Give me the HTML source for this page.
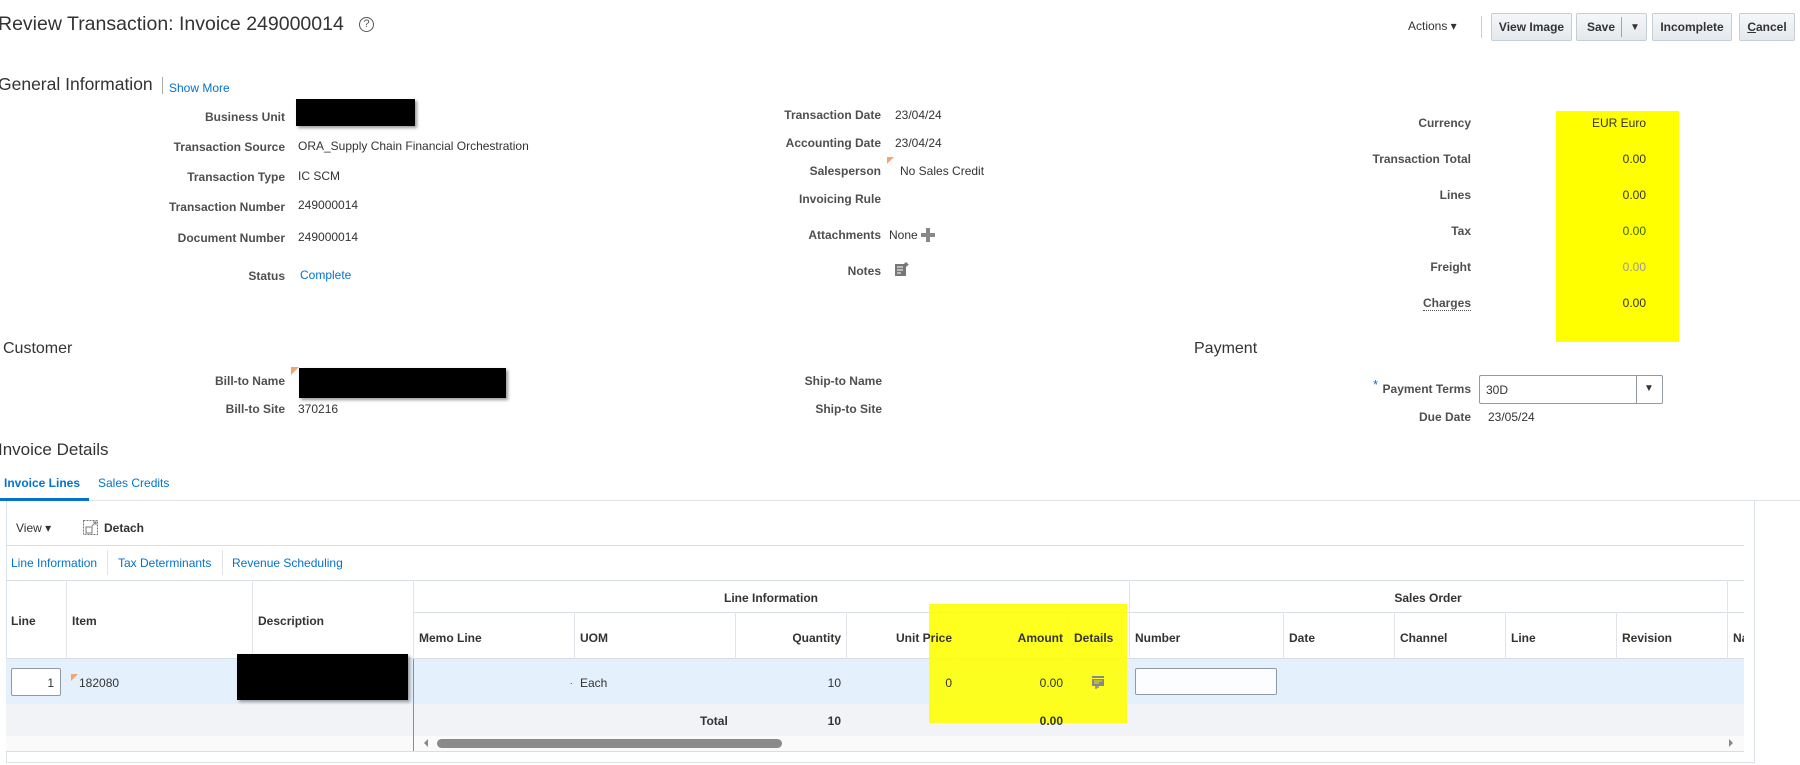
<!DOCTYPE html>
<html><head><meta charset="utf-8"><style>
*{margin:0;padding:0;box-sizing:border-box}
body{width:1800px;height:765px;overflow:hidden;background:#fff;font-family:"Liberation Sans",Arial,sans-serif;color:#333;position:relative;font-size:12px}
.a{position:absolute;white-space:nowrap}
.lb{position:absolute;white-space:nowrap;font-weight:bold;color:#4f4f4f;font-size:12px;text-align:right}
.v{position:absolute;white-space:nowrap;font-size:12px;color:#333}
.lk{color:#0572ce}
.btn{position:absolute;top:13px;height:28px;border:1px solid #c4ced7;border-radius:2px;background:linear-gradient(#f5f7f9,#e4e8ec);font-weight:bold;font-size:12px;color:#333;display:flex;align-items:center;justify-content:center}
.h{position:absolute;font-weight:bold;color:#333;font-size:12px;white-space:nowrap}
.vl{position:absolute;width:1px;background:#e1e5ea}
.hl{position:absolute;height:1px;background:#d6dfe6}
.rv{position:absolute;width:120px;text-align:right;color:#333;font-size:12px}
</style></head><body>

<div class="a" style="left:-2px;top:13px;font-size:19.5px;color:#333">Review Transaction: Invoice 249000014</div>
<div class="a" style="left:359px;top:17px;width:15px;height:15px;border:1.3px solid #555;border-radius:50%;font-size:11px;line-height:13px;text-align:center;color:#555">?</div>

<div class="a" style="left:1408px;top:19px;font-size:12px;color:#333">Actions ▾</div>
<div class="a" style="left:1481px;top:16px;width:1px;height:22px;background:#ccc"></div>
<div class="btn" style="left:1491px;width:81px">View Image</div>
<div class="btn" style="left:1576px;width:71px;justify-content:flex-start;padding-left:10px">Save<span style="position:absolute;left:44px;top:3px;bottom:3px;width:1px;background:#9aa"></span><span style="position:absolute;left:53px;font-size:10px">▼</span></div>
<div class="btn" style="left:1652px;width:80px">Incomplete</div>
<div class="btn" style="left:1739px;width:56px"><u>C</u>ancel</div>

<div class="a" style="left:-2px;top:74px;font-size:17.5px;color:#333">General Information</div>
<div class="a" style="left:162px;top:77px;width:1px;height:17px;background:#aaa"></div>
<div class="a lk" style="left:169px;top:81px;font-size:12px">Show More</div>

<div class="lb" style="right:1515px;top:110px">Business Unit</div>
<div class="a" style="left:296px;top:99px;width:119px;height:27px;background:#000;box-shadow:2px 2px 3px #999"></div>
<div class="lb" style="right:1515px;top:140px">Transaction Source</div><div class="v" style="left:298px;top:139px">ORA_Supply Chain Financial Orchestration</div>
<div class="lb" style="right:1515px;top:170px">Transaction Type</div><div class="v" style="left:298px;top:169px">IC SCM</div>
<div class="lb" style="right:1515px;top:200px">Transaction Number</div><div class="v" style="left:298px;top:198px">249000014</div>
<div class="lb" style="right:1515px;top:231px">Document Number</div><div class="v" style="left:298px;top:230px">249000014</div>
<div class="lb" style="right:1515px;top:269px">Status</div><div class="v lk" style="left:300px;top:268px">Complete</div>

<div class="lb" style="right:919px;top:108px">Transaction Date</div><div class="v" style="left:895px;top:108px">23/04/24</div>
<div class="lb" style="right:919px;top:136px">Accounting Date</div><div class="v" style="left:895px;top:136px">23/04/24</div>
<div class="a" style="left:887px;top:157px;width:0;height:0;border-top:7px solid #f6a36f;border-right:7px solid transparent"></div>
<div class="lb" style="right:919px;top:164px">Salesperson</div><div class="v" style="left:900px;top:164px">No Sales Credit</div>
<div class="lb" style="right:919px;top:192px">Invoicing Rule</div>
<div class="lb" style="right:919px;top:228px">Attachments</div><div class="v" style="left:889px;top:228px">None</div>
<div class="a" style="left:921px;top:228px;width:14px;height:14px"><div style="position:absolute;left:5px;top:0;width:4px;height:14px;background:#888"></div><div style="position:absolute;left:0;top:5px;width:14px;height:4px;background:#888"></div></div>
<div class="lb" style="right:919px;top:264px">Notes</div>
<svg class="a" style="left:895px;top:262px" width="14" height="14" viewBox="0 0 14 14"><rect x="0" y="2" width="11" height="12" fill="#777"/><path d="M2 5h6M2 8h6M2 11h4" stroke="#fff" stroke-width="1"/><path d="M11 0v5M8.5 2.5h5M9.5 1l3 3M12.5 1l-3 3" stroke="#777" stroke-width="1"/></svg>

<div class="a" style="left:1556px;top:111px;width:123px;height:231px;background:#ffff00"></div>
<div class="lb" style="right:329px;top:116px">Currency</div><div class="rv" style="left:1526px;top:116px">EUR Euro</div>
<div class="lb" style="right:329px;top:152px">Transaction Total</div><div class="rv" style="left:1526px;top:152px">0.00</div>
<div class="lb" style="right:329px;top:188px">Lines</div><div class="rv" style="left:1526px;top:188px">0.00</div>
<div class="lb" style="right:329px;top:224px">Tax</div><div class="rv" style="left:1526px;top:224px;color:#3a6a00">0.00</div>
<div class="lb" style="right:329px;top:260px">Freight</div><div class="rv" style="left:1526px;top:260px;color:#999">0.00</div>
<div class="lb" style="right:329px;top:296px;border-bottom:1px dotted #555">Charges</div><div class="rv" style="left:1526px;top:296px">0.00</div>

<div class="a" style="left:3px;top:340px;font-size:16px">Customer</div>
<div class="a" style="left:1194px;top:340px;font-size:16px">Payment</div>
<div class="a" style="left:291px;top:367px;width:0;height:0;border-top:8px solid #f6a36f;border-right:8px solid transparent"></div>
<div class="lb" style="right:1515px;top:374px">Bill-to Name</div>
<div class="a" style="left:299px;top:368px;width:207px;height:30px;background:#000;box-shadow:2px 2px 3px #999"></div>
<div class="lb" style="right:1515px;top:402px">Bill-to Site</div><div class="v" style="left:298px;top:402px">370216</div>
<div class="lb" style="right:918px;top:374px">Ship-to Name</div>
<div class="lb" style="right:918px;top:402px">Ship-to Site</div>
<div class="a" style="left:1373px;top:377px;color:#0572ce;font-size:13px">*</div>
<div class="lb" style="right:329px;top:382px">Payment Terms</div>
<div class="a" style="left:1479px;top:375px;width:184px;height:29px;border:1px solid #8f9aa4;border-radius:2px;background:#fff"><span style="position:absolute;left:6px;top:7px">30D</span><span style="position:absolute;left:156px;top:0;bottom:0;width:1px;background:#8f9aa4"></span><span style="position:absolute;left:164px;top:7px;font-size:10px">▼</span></div>
<div class="lb" style="right:329px;top:410px">Due Date</div><div class="v" style="left:1488px;top:410px">23/05/24</div>

<div class="a" style="left:-2px;top:440px;font-size:17px">Invoice Details</div>
<div class="a lk" style="left:4px;top:476px;font-weight:bold">Invoice Lines</div>
<div class="a lk" style="left:98px;top:476px">Sales Credits</div>
<div class="hl" style="left:0;top:500px;width:1800px;background:#dde3e9"></div>
<div class="a" style="left:0;top:498px;width:89px;height:3px;background:#0572ce"></div>

<div class="a" style="left:6px;top:501px;width:1749px;height:262px;border:1px solid #dbe2e8;border-top:none"></div>
<div class="a" style="left:16px;top:521px">View ▾</div>
<svg class="a" style="left:83px;top:520px" width="15" height="15"><rect x="0.5" y="0.5" width="14" height="14" fill="none" stroke="#777" stroke-dasharray="2 1"/><rect x="3" y="7" width="6" height="6" fill="none" stroke="#777"/><path d="M9 6l4-4M10 2h3v3" stroke="#777" fill="none"/></svg>
<div class="a" style="left:104px;top:521px;font-weight:bold">Detach</div>
<div class="hl" style="left:6px;top:545px;width:1738px"></div>
<div class="a lk" style="left:11px;top:556px">Line Information</div>
<div class="vl" style="left:107px;top:550px;height:25px"></div>
<div class="a lk" style="left:118px;top:556px">Tax Determinants</div>
<div class="vl" style="left:222px;top:550px;height:25px"></div>
<div class="a lk" style="left:232px;top:556px">Revenue Scheduling</div>
<div class="hl" style="left:6px;top:580px;width:1738px"></div>

<!-- rows bg -->
<div class="a" style="left:6px;top:659px;width:1738px;height:45px;background:#e4f0fc"></div>
<div class="a" style="left:6px;top:704px;width:1738px;height:32px;background:#f1f3f6"></div>
<div class="a" style="left:6px;top:736px;width:1738px;height:15px;background:#fafafa"></div>
<div class="hl" style="left:6px;top:751px;width:1738px"></div>
<div class="hl" style="left:413px;top:612px;width:1331px"></div>
<div class="hl" style="left:6px;top:658px;width:1738px"></div>
<div class="vl" style="left:66px;top:580px;height:79px"></div>
<div class="vl" style="left:252px;top:580px;height:79px"></div>
<div class="vl" style="left:413px;top:580px;height:79px"></div>
<div class="vl" style="left:413px;top:659px;height:92px;background:#4aa3c8"></div>
<div class="vl" style="left:1129px;top:580px;height:79px"></div>
<div class="vl" style="left:1727px;top:580px;height:79px"></div>
<div class="vl" style="left:574px;top:612px;height:47px"></div>
<div class="vl" style="left:735px;top:612px;height:47px"></div>
<div class="vl" style="left:846px;top:612px;height:47px"></div>
<div class="vl" style="left:957px;top:612px;height:47px"></div>
<div class="vl" style="left:1068px;top:612px;height:47px"></div>
<div class="vl" style="left:1283px;top:612px;height:47px"></div>
<div class="vl" style="left:1394px;top:612px;height:47px"></div>
<div class="vl" style="left:1505px;top:612px;height:47px"></div>
<div class="vl" style="left:1616px;top:612px;height:47px"></div>

<div class="a" style="left:929px;top:604px;width:198px;height:119px;background:rgba(255,255,0,0.88)"></div>

<div class="h" style="left:11px;top:614px">Line</div>
<div class="h" style="left:72px;top:614px">Item</div>
<div class="h" style="left:258px;top:614px">Description</div>
<div class="h" style="left:413px;top:591px;width:716px;text-align:center">Line Information</div>
<div class="h" style="left:1129px;top:591px;width:598px;text-align:center">Sales Order</div>
<div class="h" style="left:419px;top:631px">Memo Line</div>
<div class="h" style="left:580px;top:631px">UOM</div>
<div class="h" style="left:735px;top:631px;width:106px;text-align:right">Quantity</div>
<div class="h" style="left:846px;top:631px;width:106px;text-align:right">Unit Price</div>
<div class="h" style="left:957px;top:631px;width:106px;text-align:right">Amount</div>
<div class="h" style="left:1074px;top:631px">Details</div>
<div class="h" style="left:1135px;top:631px">Number</div>
<div class="h" style="left:1289px;top:631px">Date</div>
<div class="h" style="left:1400px;top:631px">Channel</div>
<div class="h" style="left:1511px;top:631px">Line</div>
<div class="h" style="left:1622px;top:631px">Revision</div>
<div class="h" style="left:1733px;top:631px;width:11px;overflow:hidden">Na</div>

<div class="a" style="left:11px;top:668px;width:50px;height:28px;border:1px solid #8f9aa4;border-radius:2px;background:#fff;text-align:right;padding:7px 6px 0 0">1</div>
<div class="a" style="left:71px;top:674px;width:0;height:0;border-top:7px solid #f6a36f;border-right:7px solid transparent"></div>
<div class="v" style="left:79px;top:676px">182080</div>
<div class="a" style="left:237px;top:654px;width:171px;height:46px;background:#000;box-shadow:2px 2px 3px #999"></div>
<div class="v" style="left:570px;top:676px;font-size:9px">.</div>
<div class="v" style="left:580px;top:676px">Each</div>
<div class="v" style="left:735px;top:676px;width:106px;text-align:right">10</div>
<div class="v" style="left:846px;top:676px;width:106px;text-align:right">0</div>
<div class="v" style="left:957px;top:676px;width:106px;text-align:right">0.00</div>
<svg class="a" style="left:1091px;top:676px" width="15" height="14"><rect x="1" y="0" width="12" height="2" fill="#888"/><rect x="1" y="3" width="12" height="7" fill="#888"/><path d="M3 5h8M3 7h5" stroke="#e8e800"/><path d="M5 9v4M5 11h3" stroke="#888" stroke-width="1.5"/></svg>
<div class="a" style="left:1135px;top:668px;width:142px;height:27px;border:1px solid #8f9aa4;border-radius:2px;background:#fcfdfe"></div>

<div class="h" style="left:700px;top:714px">Total</div>
<div class="h" style="left:735px;top:714px;width:106px;text-align:right">10</div>
<div class="h" style="left:957px;top:714px;width:106px;text-align:right">0.00</div>

<div class="a" style="left:424px;top:739px;width:0;height:0;border-top:4px solid transparent;border-bottom:4px solid transparent;border-right:4px solid #888"></div>
<div class="a" style="left:437px;top:739px;width:345px;height:9px;border-radius:5px;background:#8a8a8a"></div>
<div class="a" style="left:1729px;top:739px;width:0;height:0;border-top:4px solid transparent;border-bottom:4px solid transparent;border-left:4px solid #888"></div>
</body></html>
